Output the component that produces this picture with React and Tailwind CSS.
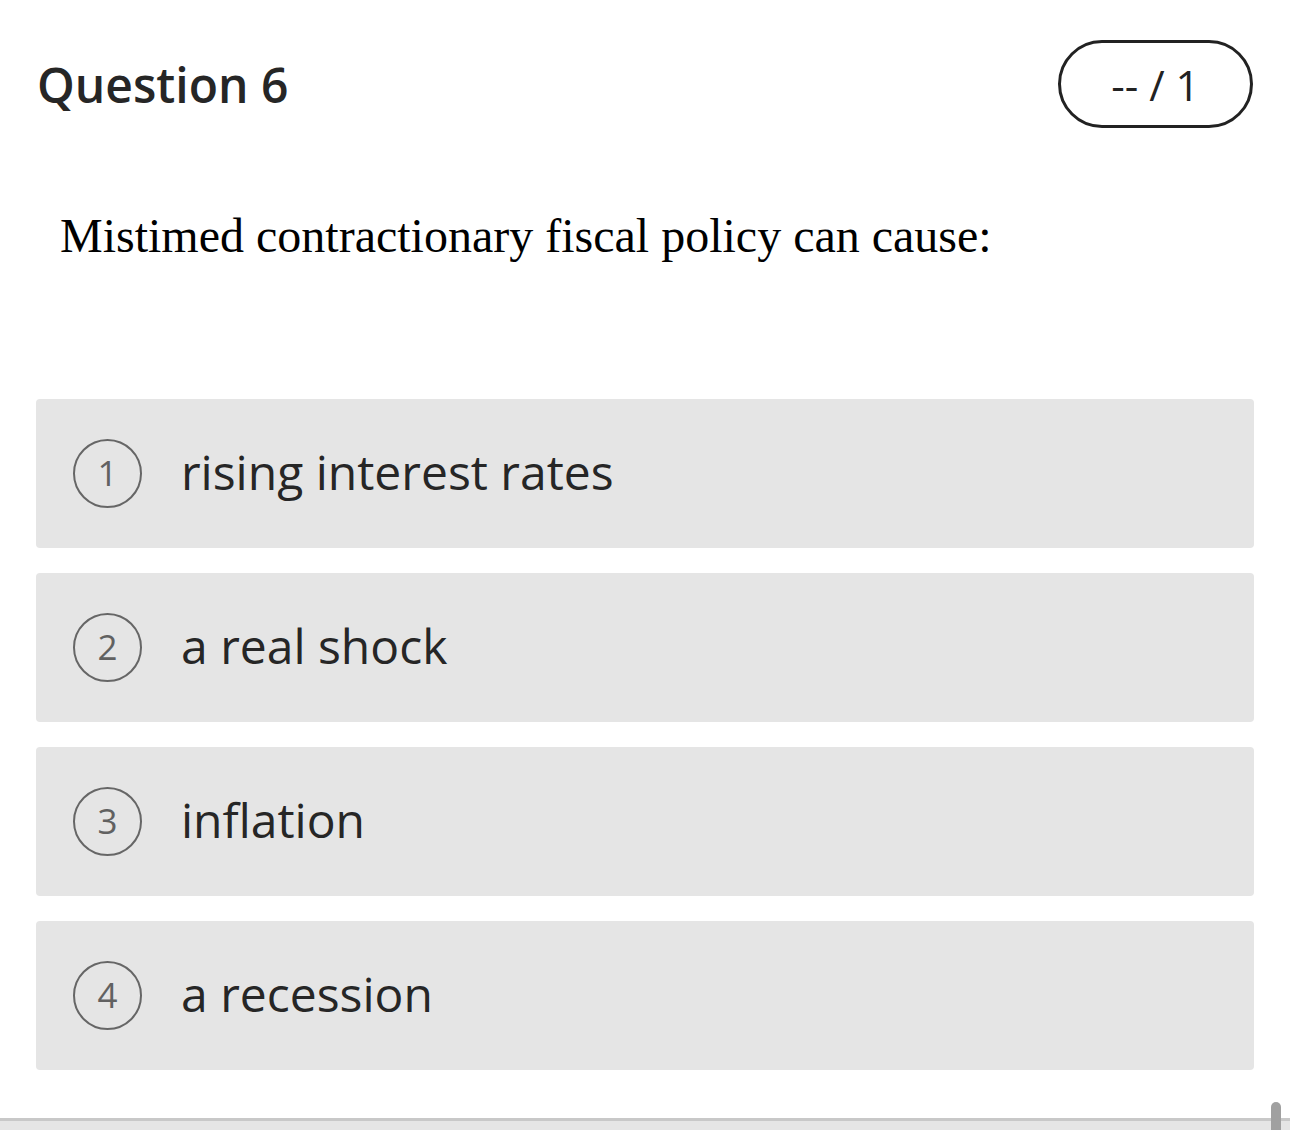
import React from 'react';

const options = ['rising interest rates', 'a real shock', 'inflation', 'a recession'];

export default function App() {
    return (
        <div className="w-[1290px] h-[1130px] bg-white overflow-hidden flex flex-col font-['Open_Sans',sans-serif] text-[#262626]">
            {/* Header */}
            <div className="flex items-center justify-between pl-[37px] pr-[37px] pt-[40px]">
                <h1 className="text-[48px] font-semibold leading-none mt-[2px]">Question 6</h1>
                <div className="w-[195px] h-[88px] rounded-full border-[3px] border-[#222] flex items-center justify-center text-[42px] text-[#222]">
                    -- / 1
                </div>
            </div>

            {/* Question text */}
            <p className="pl-[60px] mt-[84px] text-[48px] leading-none text-black font-['Liberation_Serif',serif]">
                Mistimed contractionary fiscal policy can cause:
            </p>

            {/* Options */}
            <div className="mt-[139px] px-[36px] flex flex-col gap-[25px]">
                {options.map((opt, i) => (
                    <div key={i} className="h-[149px] bg-[#e5e5e5] rounded-[4px] flex items-center pl-[37px]">
                        <div className="w-[69px] h-[69px] rounded-full border-[2.5px] border-[#666] flex items-center justify-center text-[35px] font-medium text-[#616161] shrink-0">
                            {i + 1}
                        </div>
                        <span className="ml-[39px] text-[48px] text-[#262626] leading-none -mt-[4px]">{opt}</span>
                    </div>
                ))}
            </div>

            {/* Bottom bar */}
            <div className="mt-auto relative h-[12px] border-t-[3px] border-[#c8c8c8] bg-[#e5e5e5]">
                <div className="absolute right-[9px] bottom-0 w-[10px] h-[28px] rounded-t-full bg-[#a0a0a0]" />
            </div>
        </div>
    );
}
